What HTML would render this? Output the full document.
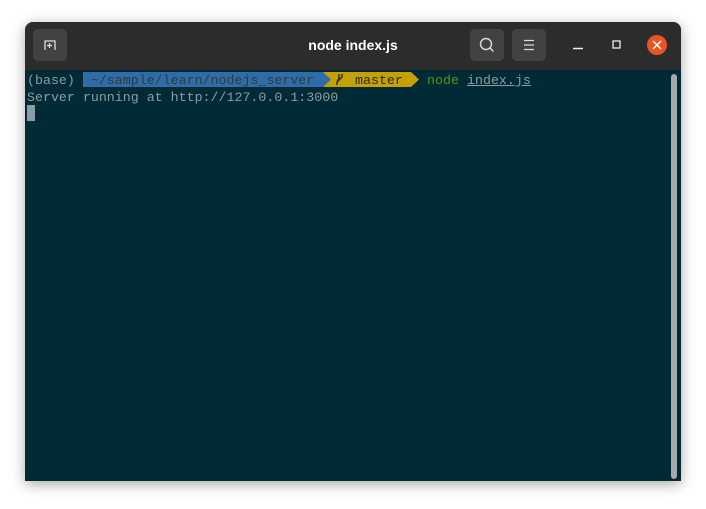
<!DOCTYPE html><html><head><style>
body{margin:0;width:706px;height:509px;background:#fff;position:relative;overflow:hidden;font-family:"Liberation Sans",sans-serif}
.win{position:absolute;left:25px;top:22px;width:656px;height:459px;border-radius:8px 8px 0 0;background:#2c2c2c;box-shadow:0 3px 14px rgba(0,0,0,.35);overflow:hidden}
.tb{position:absolute;left:0;top:0;width:656px;height:48px;background:#2c2c2c}
.btn{position:absolute;top:7px;width:34px;height:32px;background:#424242;border-radius:5px}
.title{position:absolute;left:0;right:0;top:15px;text-align:center;color:#fff;font-weight:bold;font-size:14px}
.term{position:absolute;left:0;top:48px;width:656px;height:411px;background:#002b36}
.t{position:absolute;font-family:"Liberation Mono","DejaVu Sans Mono",monospace;font-size:13.3px;line-height:17px;white-space:pre;color:#8a9ea3}
</style></head><body>
<div class="win">
<div class="tb">
<div class="btn" style="left:8px"><svg width="34" height="32"><path d="M12 21V12h10v9M14 16.5h5M16.5 14v5" stroke="#ddd" stroke-width="1.3" fill="none"/></svg></div>
<div class="title">node index.js</div>
<div class="btn" style="left:445px"><svg width="34" height="32"><circle cx="16" cy="15" r="5.5" stroke="#ddd" stroke-width="1.4" fill="none"/><path d="M20 19l3.5 3.5" stroke="#ddd" stroke-width="1.4"/></svg></div>
<div class="btn" style="left:487px"><svg width="34" height="32"><path d="M12 11.5h10M12 16h10M12 20.5h10" stroke="#ddd" stroke-width="1.2"/></svg></div>
<svg style="position:absolute;left:540px;top:12px" width="110" height="26"><path d="M8 14.5h10" stroke="#eee" stroke-width="1.4"/><rect x="48" y="7" width="7" height="7" stroke="#eee" stroke-width="1.3" fill="none"/><circle cx="92" cy="11" r="10" fill="#e95420"/><path d="M88 7l8 8M96 7l-8 8" stroke="#fff" stroke-width="1.5"/></svg>
</div>
<div class="term">
<div style="position:absolute;left:58px;top:2px;width:240px;height:15px;background:#2f6ca8"></div>
<svg style="position:absolute;left:298px;top:2px" width="100" height="15"><rect x="0" y="0" width="88" height="15" fill="#c4a000"/><path d="M0 0L8 7.5L0 15Z" fill="#2f6ca8"/><path d="M88 0L96 7.5L88 15Z" fill="#c4a000"/><path d="M16 2v4l-2 4v3M19 2v3l-5 5" stroke="#2a2a20" stroke-width="1.4" fill="none"/></svg>
<div class="t" style="left:2px;top:2px">(base)  <span style="color:#2a3c3d">~/sample/learn/nodejs_server</span></div>
<div class="t" style="left:330px;top:2px;color:#2a2a20">master</div>
<div class="t" style="left:402px;top:2px;color:#4e9a06">node</div>
<div class="t" style="left:442px;top:2px;text-decoration:underline">index.js</div>
<div class="t" style="left:2px;top:19px">Server running at http://127.0.0.1:3000</div>
<div style="position:absolute;left:2px;top:35px;width:8px;height:16px;background:#8a9ea3"></div>
<div style="position:absolute;left:646px;top:4px;width:6px;height:405px;border-radius:3px;background:#a5a8a8"></div>
</div>
</div>
</body></html>
